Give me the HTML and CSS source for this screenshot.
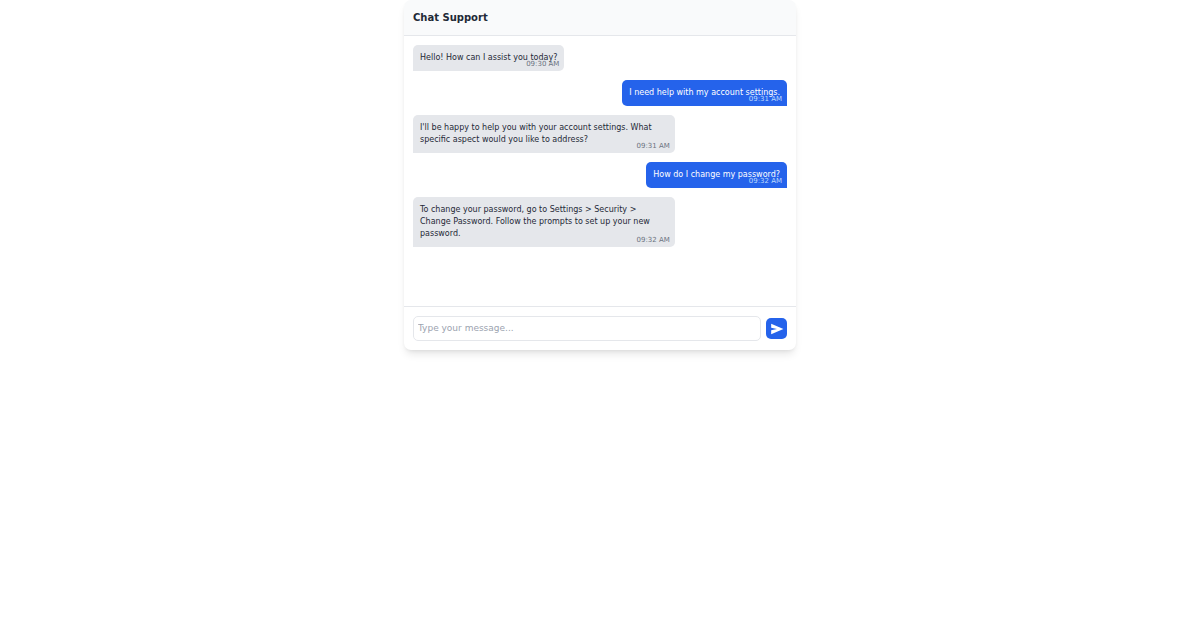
FILE: index.html
```html
<!DOCTYPE html>
<html lang="en">
<head>
    <meta charset="UTF-8">
    <meta name="viewport" content="width=device-width, initial-scale=1.0">
    <title>Chat Support</title>
    <link rel="stylesheet" href="styles.css">
</head>
<body>
    <main class="chat">
        <header class="chat-header">
            <h1>Chat Support</h1>
        </header>

        <div class="messages" id="messages">
            <div class="message">
                <p>Hello! How can I assist you today?</p>
                <span class="time">09:30 AM</span>
            </div>
            <div class="message user">
                <p>I need help with my account settings.</p>
                <span class="time">09:31 AM</span>
            </div>
            <div class="message">
                <p>I'll be happy to help you with your account settings. What specific aspect would you like to address?</p>
                <span class="time">09:31 AM</span>
            </div>
            <div class="message user">
                <p>How do I change my password?</p>
                <span class="time">09:32 AM</span>
            </div>
            <div class="message">
                <p>To change your password, go to Settings &gt; Security &gt; Change Password. Follow the prompts to set up your new password.</p>
                <span class="time">09:32 AM</span>
            </div>
        </div>

        <form class="chat-form" onsubmit="return false">
            <input type="text" name="message" placeholder="Type your message..." aria-label="Message">
            <button type="submit" aria-label="Send">
                <svg viewBox="0 0 24 24" fill="currentColor">
                    <path d="M2 21 23 12 2 3v7l10 2-10 2z"/>
                </svg>
            </button>
        </form>
    </main>
</body>
</html>
```

FILE: styles.css
```css
* {
    box-sizing: border-box;
}
body {
    margin: 0;
    min-height: 100vh;
    font-family: "DejaVu Sans", sans-serif;
    background: #fff;
    color: #1f2937;
}
.chat {
    max-width: 392px;
    margin: 0 auto;
    background: #fff;
    border-radius: 7px;
    box-shadow: 0 6px 9px -2px rgba(0, 0, 0, 0.1), 0 2px 4px -2px rgba(0, 0, 0, 0.1);
    overflow: hidden;
}
.chat-header {
    padding: 9px;
    background: #f9fafb;
    border-bottom: 1px solid #e5e7eb;
}
.chat-header h1 {
    margin: 0;
    font-size: 10px;
    line-height: 17px;
    font-weight: bold;
}
.messages {
    display: flex;
    flex-direction: column;
    align-items: flex-start;
    gap: 9px;
    height: 270px;
    padding: 9px;
    overflow-y: auto;
}
.message {
    position: relative;
    max-width: 70%;
    padding: 7px;
    font-size: 8px;
    line-height: 12px;
    background: #e5e7eb;
    border-radius: 5px 5px 5px 0;
}
.message p {
    margin: 0;
}
.message.user {
    align-self: flex-end;
    background: #2563eb;
    color: #fff;
    border-radius: 5px 5px 0 5px;
}
.time {
    position: absolute;
    right: 5px;
    bottom: 2px;
    font-size: 7px;
    line-height: 9px;
    color: #6b7280;
}
.user .time {
    color: #bfdbfe;
}
.chat-form {
    display: flex;
    align-items: center;
    gap: 5px;
    padding: 9px;
    border-top: 1px solid #e5e7eb;
}
.chat-form input {
    flex: 1;
    min-width: 0;
    height: 25px;
    padding: 0 4px 1px;
    font-family: inherit;
    font-size: 9px;
    color: inherit;
    border: 1px solid #e5e7eb;
    border-radius: 5px;
}
.chat-form input::placeholder {
    color: #9ca3af;
}
.chat-form button {
    display: flex;
    align-items: center;
    justify-content: center;
    width: 21px;
    height: 21px;
    padding: 0;
    background: #2563eb;
    color: #fff;
    border: none;
    border-radius: 5px;
    cursor: pointer;
}
.chat-form svg {
    width: 14px;
    height: 14px;
}
```
